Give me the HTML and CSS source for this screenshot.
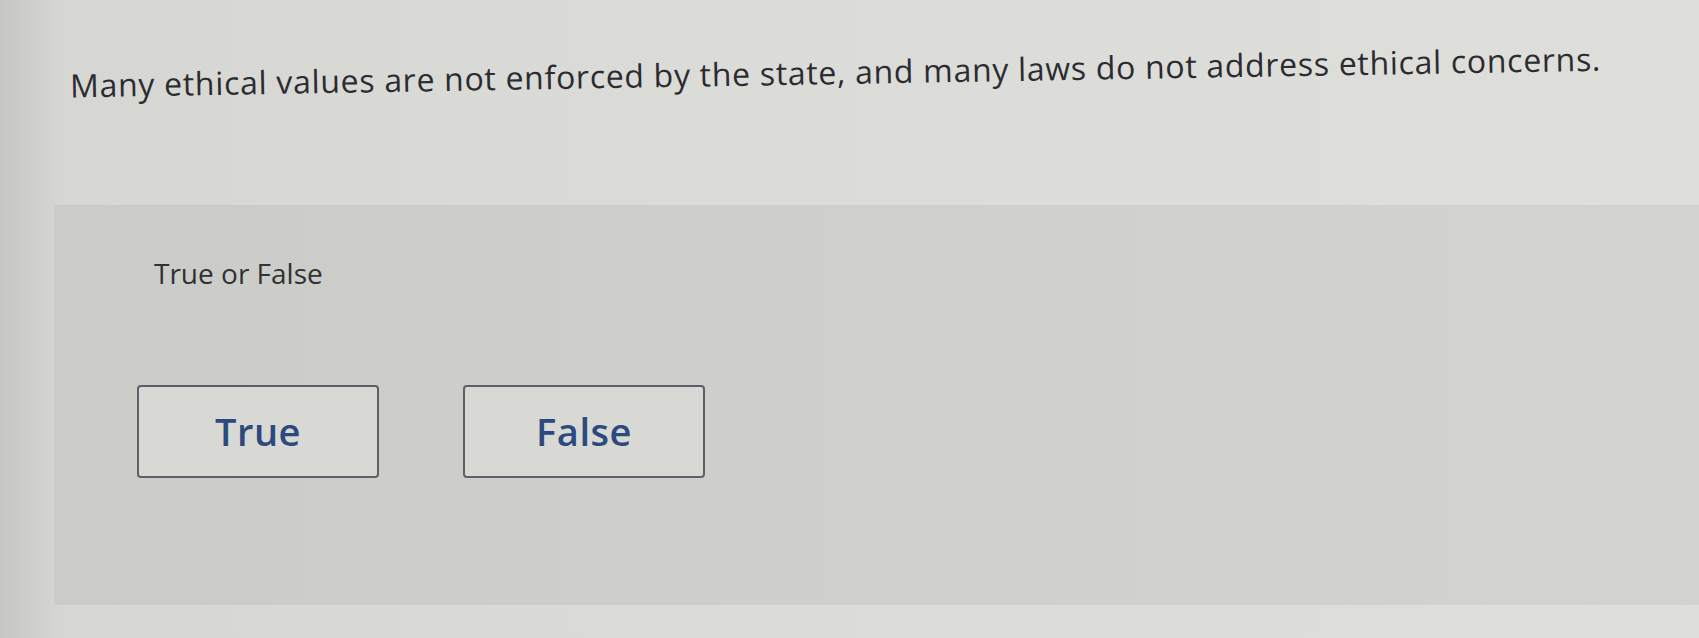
FILE: index.html
```html
<!DOCTYPE html>
<html lang="en">
<head>
    <meta charset="UTF-8">
    <meta name="viewport" content="width=device-width, initial-scale=1.0">
    <title>True or False</title>
    <link rel="stylesheet" href="styles.css">
</head>
<body>
    <div class="question">
        <p class="prompt">Many ethical values are not enforced by the state, and many laws do not address ethical concerns.</p>
    </div>
    <div class="answer-panel">
        <div class="answer-label">True or False</div>
        <div class="choices">
            <button class="choice">True</button>
            <button class="choice">False</button>
        </div>
    </div>
</body>
</html>
```
FILE: styles.css
```css
body {
    margin: 0;
    height: 638px;
    overflow: hidden;
    font-family: "Open Sans", Lato, sans-serif;
    background: linear-gradient(to right, #c6c6c3 0, #d6d6d3 60px, #dbdbd8 40%, #dedfdb 100%);
}
.question {
    padding: 53px 0 0 70px;
}
.prompt {
    margin: 0;
    font-size: 32px;
    letter-spacing: 0.7px;
    line-height: 1.2;
    color: #2b2b30;
    white-space: nowrap;
    transform: rotate(-1deg);
    transform-origin: 770px 50%;
}
.answer-panel {
    margin: 114px 0 0 54px;
    height: 400px;
    box-sizing: border-box;
    padding: 52px 0 0 83px;
    background: linear-gradient(to right, #cbccc8 0, #cfd0cc 45%, #d3d4d0 100%);
}
.answer-label {
    margin-left: 17px;
    font-size: 28px;
    line-height: 1.2;
    color: #313136;
}
.choices {
    display: flex;
    gap: 84px;
    margin-top: 94px;
}
.choice {
    width: 242px;
    height: 93px;
    padding: 0;
    font-family: "Open Sans", Lato, sans-serif;
    font-size: 38px;
    font-weight: 600;
    letter-spacing: 0.5px;
    color: #2c4a7d;
    background-color: #d8d9d5;
    border: 2px solid #5c6068;
    border-radius: 4px;
    cursor: pointer;
}
```
